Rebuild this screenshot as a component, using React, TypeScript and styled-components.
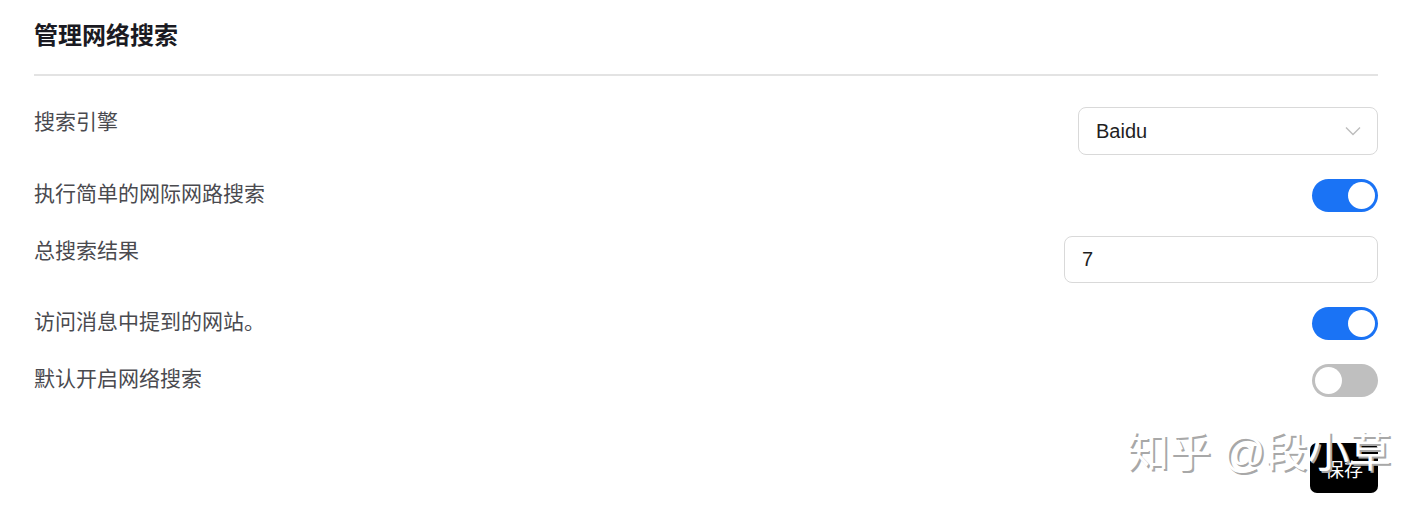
import React, { useState } from "react";
import styled, { createGlobalStyle } from "styled-components";

const GlobalStyle = createGlobalStyle`
  body {
    margin: 0;
    background: #ffffff;
    font-family: "Liberation Sans", "Noto Sans CJK SC", sans-serif;
  }
`;

const Page = styled.div`
  position: relative;
  padding: 0 50px 0 34px;
  height: 514px;
  box-sizing: border-box;
`;

const Title = styled.h2`
  margin: 0;
  padding-top: 20px;
  height: 74px;
  box-sizing: border-box;
  font-size: 24px;
  line-height: 32px;
  font-weight: 700;
  color: #1a1a22;
`;

const Divider = styled.hr`
  margin: 0 0 31px;
  border: none;
  border-top: 2px solid #e3e3e3;
`;

const List = styled.div`
  display: flex;
  flex-direction: column;
  gap: 24px;
`;

const Row = styled.div`
  display: flex;
  justify-content: space-between;
  align-items: flex-start;
`;

const Label = styled.span`
  font-size: 21px;
  line-height: 30px;
  color: #4a4a4f;
`;

const SelectBox = styled.div`
  width: 300px;
  height: 48px;
  box-sizing: border-box;
  border: 1px solid #d9d9d9;
  border-radius: 8px;
  display: flex;
  align-items: center;
  justify-content: space-between;
  padding: 0 16px 0 17px;
  font-size: 20px;
  color: #1f1f1f;
`;

const TextInput = styled.input<{ $width: number }>`
  width: ${(p) => p.$width}px;
  height: 47px;
  box-sizing: border-box;
  border: 1px solid #d9d9d9;
  border-radius: 8px;
  padding: 0 17px;
  font-family: inherit;
  font-size: 20px;
  color: #1f1f1f;
  outline: none;
`;

const Track = styled.button<{ $on: boolean }>`
  width: 66px;
  height: 33px;
  border: none;
  padding: 3px;
  border-radius: 17px;
  background: ${(p) => (p.$on ? "#1a73f5" : "#bfbfbf")};
  display: flex;
  justify-content: ${(p) => (p.$on ? "flex-end" : "flex-start")};
  cursor: pointer;
`;

const Knob = styled.span`
  width: 27px;
  height: 27px;
  border-radius: 50%;
  background: #ffffff;
`;

const Footer = styled.div`
  display: flex;
  justify-content: flex-end;
  margin-top: 46px;
`;

const SaveButton = styled.button`
  width: 68px;
  height: 50px;
  border: none;
  border-radius: 7px;
  background: #000000;
  color: #ffffff;
  font-family: inherit;
  font-size: 19px;
`;

const Watermark = styled.div`
  position: absolute;
  left: 1127px;
  top: 425px;
  font-size: 42px;
  line-height: 56px;
  color: #ffffff;
  text-shadow: 2px 2px 0 #a8a8a8;
  white-space: nowrap;
  pointer-events: none;
`;

function Toggle({ initial }: { initial: boolean }) {
  const [on, setOn] = useState(initial);
  return (
    <Track $on={on} onClick={() => setOn(!on)}>
      <Knob />
    </Track>
  );
}

function Chevron() {
  return (
    <svg width="16" height="10" viewBox="0 0 16 10" fill="none">
      <path d="M1 1.5 L8 8.5 L15 1.5" stroke="#bdbdbd" strokeWidth="1.4" />
    </svg>
  );
}

export default function App() {
  return (
    <Page>
      <GlobalStyle />
      <Title>管理网络搜索</Title>
      <Divider />
      <List>
        <Row>
          <Label>搜索引擎</Label>
          <SelectBox>
            <span>Baidu</span>
            <Chevron />
          </SelectBox>
        </Row>
        <Row>
          <Label>执行简单的网际网路搜索</Label>
          <Toggle initial={true} />
        </Row>
        <Row>
          <Label>总搜索结果</Label>
          <TextInput $width={314} defaultValue="7" />
        </Row>
        <Row>
          <Label>访问消息中提到的网站。</Label>
          <Toggle initial={true} />
        </Row>
        <Row>
          <Label>默认开启网络搜索</Label>
          <Toggle initial={false} />
        </Row>
      </List>
      <Footer>
        <SaveButton>保存</SaveButton>
      </Footer>
      <Watermark>知乎 @段小草</Watermark>
    </Page>
  );
}
